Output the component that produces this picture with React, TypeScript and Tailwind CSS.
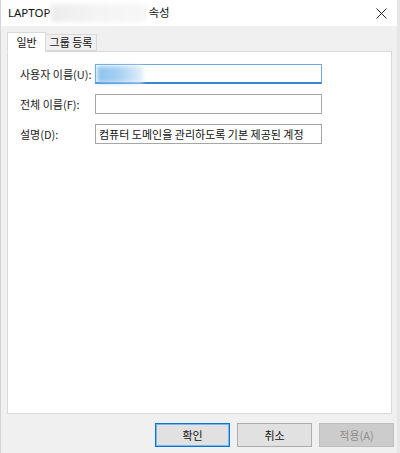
import React from 'react';

type FieldProps = {
    label: string
    value?: string
    focused?: boolean
}

const Field = ({ label, value, focused }: FieldProps) => (
    <div className="flex items-center h-[20px]">
        <div className="w-[75px] shrink-0 text-[11px] text-[#1a1a1a]">{label}</div>
        <div
            className={`relative w-[227px] h-[20px] bg-white flex items-center px-[3px] border ${
                focused ? 'border-[#6fa6df] border-b-[#3a86d6] border-b-2' : 'border-[#a6a6a6]'
            }`}
        >
            {focused && (
                <div className="absolute left-[1px] top-[1px] w-[46px] h-[17px] bg-gradient-to-r from-[#8cc2ee] via-[#a9d2f3] to-[#e3f0fb] blur-[2px]" />
            )}
            {value && <span className="text-[11px] text-[#111] whitespace-nowrap">{value}</span>}
        </div>
    </div>
)

const DialogButton = ({ label, primary, disabled }: { label: string, primary?: boolean, disabled?: boolean }) => {
    let cls = 'bg-[#e1e1e1] border-[#adadad] text-[#111]';
    if (primary) cls = 'bg-[#e1e1e1] border-[#0078d7] shadow-[inset_0_0_0_1px_#7fb6ea] text-[#111]';
    if (disabled) cls = 'bg-[#cccccc] border-[#bfbfbf] text-[#8c8c8c]';
    return (
        <div className={`w-[75px] h-[24px] border flex items-center justify-center text-[11px] ${cls}`}>
            {label}
        </div>
    );
}

export default function App() {
    return (
        <div className="w-[400px] h-[453px] flex bg-[#f0f0f0] overflow-hidden font-['Noto_Sans_CJK_KR','Noto_Sans',sans-serif]">
            {/* window behind, showing at the edges */}
            <div className="w-[1px] shrink-0 bg-[#d4d4d4]" />

            <div className="flex-1 flex flex-col">
                {/* title bar */}
                <div className="h-[26px] bg-white flex items-center pl-[7px] pr-[9px]">
                    <span className="text-[11.5px] text-[#111] font-['Noto_Sans',sans-serif]">LAPTOP</span>
                    <div className="w-[96px] h-[18px] mx-[1px] bg-gradient-to-r from-[#ececec] via-[#f4f4f4] to-[#f7f7f7] blur-[2px]" />
                    <span className="text-[11.5px] text-[#111]">속성</span>
                    <div className="flex-1" />
                    <svg width="11" height="11" viewBox="0 0 11 11" className="mr-[1px]">
                        <path d="M0.5 0.5 L10.5 10.5 M10.5 0.5 L0.5 10.5" stroke="#222" strokeWidth="1" />
                    </svg>
                </div>

                {/* tabs */}
                <div className="flex items-end pl-[6px] pt-[6px] h-[25px] relative z-10">
                    <div className="w-[39px] h-[20px] -mb-[1px] bg-white border border-[#d9d9d9] border-b-white flex items-center justify-center text-[11px] text-[#111]">
                        일반
                    </div>
                    <div className="w-[51px] h-[17px] bg-[#f0f0f0] border border-l-0 border-[#d9d9d9] flex items-center justify-center text-[11px] text-[#111]">
                        그룹 등록
                    </div>
                </div>

                {/* panel */}
                <div className="ml-[6px] mr-[5px] h-[363px] bg-white border border-[#d9d9d9] pl-[12px] pt-[12px] flex flex-col gap-[10px]">
                    <Field label="사용자 이름(U):" focused />
                    <Field label="전체 이름(F):" />
                    <Field label="설명(D):" value="컴퓨터 도메인을 관리하도록 기본 제공된 계정" />
                </div>

                {/* buttons */}
                <div className="flex justify-end gap-[7px] pt-[9px] pr-[3px]">
                    <DialogButton label="확인" primary />
                    <DialogButton label="취소" />
                    <DialogButton label="적용(A)" disabled />
                </div>
            </div>

            <div className="w-[3px] shrink-0 bg-[#e6e6e6]" />
        </div>
    );
}
